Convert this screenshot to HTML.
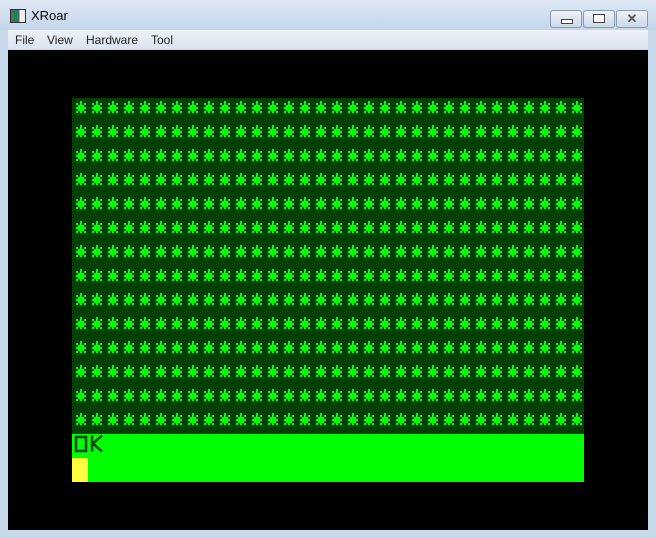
<!DOCTYPE html>
<html><head><style>
html,body{margin:0;padding:0;width:656px;height:538px;overflow:hidden;background:#c9d9ec;font-family:"Liberation Sans",sans-serif}
.title{position:absolute;left:0;top:0;width:656px;height:30px;background:linear-gradient(#dfe9f5,#c4d5ea)}
.title span{position:absolute;left:31px;top:8px;font-size:13px;color:#000}
.ico{position:absolute;left:10px;top:9px;width:14px;height:12px;border:1px solid #333;background:linear-gradient(90deg,#2e7a5a 60%,#eee 60%)}
.btn{position:absolute;top:10px;height:16px;border:1px solid #8a9bb0;border-radius:3px;background:linear-gradient(#eef3f9,#cdd9e8)}
.menu{position:absolute;left:8px;top:30px;width:640px;height:19px;background:linear-gradient(#eef2f9,#dae3f0);font-size:12px;color:#222}
.menu span{position:absolute;top:3px}
.black{position:absolute;left:8px;top:50px;width:640px;height:480px;background:#000}
.scr{position:absolute;left:72px;top:98px;width:512px;height:336px;background:#004000}
.ok{position:absolute;left:72px;top:434px;width:512px;height:48px;background:#00ff00}
.cur{position:absolute;left:72px;top:458px;width:16px;height:24px;background:#ffff40}
</style></head><body>
<div class="title"><div class="ico"></div><span>XRoar</span>
<div class="btn" style="left:550px;width:30px"><div style="position:absolute;left:10px;top:8px;width:10px;height:3px;border:1px solid #444;background:#fff"></div></div>
<div class="btn" style="left:583px;width:30px"><div style="position:absolute;left:9px;top:3px;width:10px;height:7px;border:1px solid #444;background:#fff"></div></div>
<div class="btn" style="left:616px;width:30px;font-size:13px;font-weight:bold;color:#555;text-align:center;line-height:16px">✕</div>
</div>
<div class="menu"><span style="left:7px">File</span><span style="left:39px">View</span><span style="left:78px">Hardware</span><span style="left:143px">Tool</span></div>
<div class="black"></div>
<svg class="scr" width="512" height="336" style="position:absolute">
<defs><pattern id="a" width="16" height="24" patternUnits="userSpaceOnUse">
<g fill="#00ff00">
<rect x="4" y="5" width="2" height="2"/><rect x="8" y="3" width="2" height="12"/><rect x="12" y="5" width="2" height="2"/>
<rect x="6" y="7" width="6" height="2"/><rect x="4" y="9" width="10" height="2"/><rect x="6" y="11" width="6" height="2"/>
<rect x="4" y="13" width="2" height="2"/><rect x="12" y="13" width="2" height="2"/>
</g></pattern></defs>
<rect width="512" height="336" fill="#004000"/><rect width="512" height="336" fill="url(#a)"/>
</svg>
<div class="ok"><svg width="40" height="24" style="position:absolute;left:0;top:0"><g fill="none" stroke="#004000" stroke-width="2.5"><rect x="4" y="3" width="10" height="14"/><path d="M20 1.5v16M30 1.5l-9 8 9 8"/></g></svg></div>
<div class="cur"></div>
</body></html>
